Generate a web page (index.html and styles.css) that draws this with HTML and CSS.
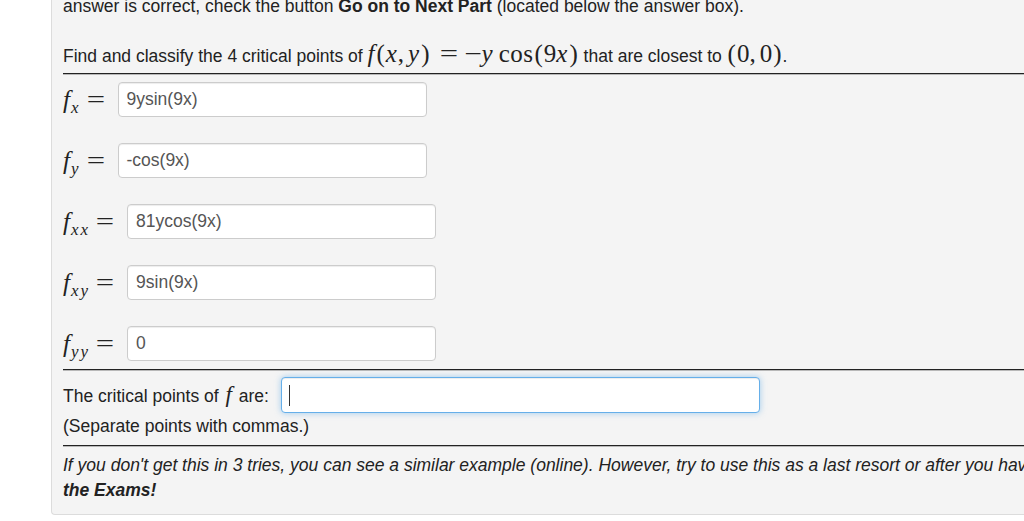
FILE: index.html
```html
<!DOCTYPE html>
<html>
<head>
<meta charset="utf-8">
<link rel="stylesheet" href="styles.css">
</head>
<body>
<div class="panel">
  <p class="intro">answer is correct, check the button <b>Go on to Next Part</b> (located below the answer box).</p>
  <p class="question">Find and classify the 4 critical points of <span class="m"><i>f</i><span class="p">(</span><i>x</i>,<span class="th"></span><i>y</i><span class="p">)</span><span class="rel">=</span><span class="minus">−</span><i>y</i><span class="op">cos</span><span class="p">(</span>9<i>x</i><span class="p">)</span></span> that are closest to <span class="m"><span class="p">(</span>0,<span class="th"></span>0<span class="p">)</span></span>.</p>
  <hr class="rule-top">
  <div class="rows">
    <div class="row"><span class="lbl"><i>f</i><sub>x</sub><span class="eq">=</span></span><div class="field">9ysin(9x)</div></div>
    <div class="row"><span class="lbl"><i>f</i><sub>y</sub><span class="eq">=</span></span><div class="field">-cos(9x)</div></div>
    <div class="row"><span class="lbl"><i>f</i><sub>xx</sub><span class="eq">=</span></span><div class="field">81ycos(9x)</div></div>
    <div class="row"><span class="lbl"><i>f</i><sub>xy</sub><span class="eq">=</span></span><div class="field">9sin(9x)</div></div>
    <div class="row"><span class="lbl"><i>f</i><sub>yy</sub><span class="eq">=</span></span><div class="field">0</div></div>
  </div>
  <hr class="rule-mid">
  <div class="crit"><span class="crit-text">The critical points of <i class="mf">f</i> are:</span><div class="field focus"><span class="caret"></span></div></div>
  <p class="note">(Separate points with commas.)</p>
  <hr class="rule-low">
  <p class="hint"><i>If you don't get this in 3 tries, you can see a similar example (online). However, try to use this as a last resort or after you have really tried to solve the problem. <b>There are no similar examples on</b><br><b>the Exams!</b></i></p>
</div>
</body>
</html>
```

FILE: styles.css
```css
html, body {
  margin: 0;
  padding: 0;
  background: #fff;
  overflow: hidden;
}
body {
  width: 1024px;
  height: 521px;
  font-family: "Liberation Sans", Arial, sans-serif;
  font-size: 17.5px;
  color: #222;
}
.panel {
  margin: -4px 0 0 51px;
  width: 1100px;
  background: #f4f4f4;
  border-left: 1px solid #dcdcdc;
  border-bottom: 1px solid #dcdcdc;
  border-bottom-left-radius: 4px;
  padding: 0 0 11px 11px;
}
p {
  margin: 0;
  line-height: 20px;
  white-space: nowrap;
}
.question {
  margin-top: 24px;
  line-height: 28px;
}
.m {
  font-family: "Liberation Serif", serif;
  font-size: 25px;
  line-height: 28px;
}
.m i {
  margin-right: 1px;
}
.p {
  margin: 0 1px;
}
.th {
  display: inline-block;
  width: 4px;
}
.rel {
  display: inline-block;
  width: 20px;
  text-align: center;
  transform: scaleX(1.3);
  margin: 0 0 0 8px;
}
.minus {
  display: inline-block;
  width: 16px;
  text-align: center;
  transform: scaleX(1.25);
  margin-left: 6px;
  margin-right: 1px;
}
.op {
  margin-left: 5px;
  letter-spacing: 0.5px;
}
hr {
  margin: 0;
  height: 0;
  border: 0;
  border-top: 1px solid #222;
  border-bottom: 1px solid #b8b8b8;
}
.rule-top {
  margin-top: 3px;
}
.rows {
  display: flex;
  flex-direction: column;
  gap: 26px;
  margin-top: 7px;
}
.row {
  display: flex;
  align-items: center;
  height: 35px;
}
.lbl {
  font-family: "Liberation Serif", serif;
  font-size: 25px;
  line-height: 28px;
  margin-right: 13px;
  white-space: nowrap;
}
.lbl sub {
  font-size: 17px;
  font-style: italic;
  vertical-align: -5px;
  line-height: 0;
  margin-left: 1px;
  letter-spacing: 2px;
}
.eq {
  display: inline-block;
  width: 18px;
  text-align: center;
  transform: scaleX(1.3);
  margin-left: 6px;
}
.field {
  box-sizing: border-box;
  width: 309px;
  height: 35px;
  background: #fff;
  border: 1px solid #ccc;
  border-radius: 4px;
  box-shadow: inset 0 1px 1px rgba(0, 0, 0, 0.075);
  padding: 0 8px;
  display: flex;
  align-items: center;
  color: #555;
  font-size: 17.5px;
}
.rule-mid {
  margin-top: 8px;
}
.crit {
  display: flex;
  align-items: center;
  margin-top: 6px;
}
.crit-text {
  margin-right: 12px;
}
.mf {
  font-family: "Liberation Serif", serif;
  font-size: 23px;
  margin: 0 2px;
}
.field.focus {
  width: 479px;
  height: 36px;
  border-color: #66afe9;
  box-shadow: inset 0 1px 1px rgba(0, 0, 0, 0.075), 0 0 6px rgba(102, 175, 233, 0.6);
  padding-left: 7px;
}
.caret {
  display: block;
  width: 1px;
  height: 21px;
  background: #333;
}
.note {
  margin-top: 3px;
}
.rule-low {
  margin-top: 9px;
}
.hint {
  margin-top: 6px;
  line-height: 25px;
}
```
